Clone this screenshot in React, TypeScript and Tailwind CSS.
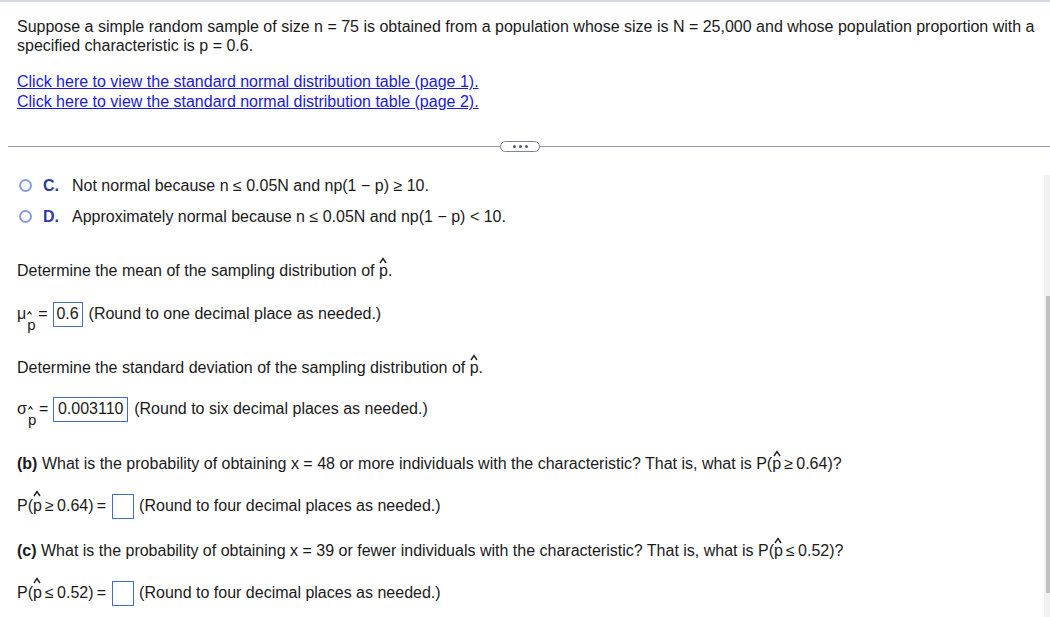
import React from "react";

const Hat = ({ top = -4 }: { top?: number }) => (
  <svg
    className="absolute left-1/2 -translate-x-1/2"
    style={{ top }}
    width="8"
    height="7"
    viewBox="0 0 8 7"
  >
    <path d="M1 6 L4 1.5 L7 6" fill="none" stroke="#1f1f1f" strokeWidth="1.4" />
  </svg>
);

const PHat = () => (
  <span className="relative inline-block">
    p
    <Hat top={-4} />
  </span>
);

const SubPHat = ({ sym }: { sym: string }) => (
  <span className="inline-flex items-start">
    <span>{sym}</span>
    <span className="relative inline-block w-[12px] h-[18px] text-[15px]">
      <svg className="absolute left-[1px] top-[9px]" width="5" height="4" viewBox="0 0 5 4">
        <path d="M0.5 3.5 L2.5 0.8 L4.5 3.5" fill="none" stroke="#1f1f1f" strokeWidth="1.2" />
      </svg>
      <span className="absolute left-[1px] top-[15px] leading-none">p</span>
    </span>
  </span>
);

const Box = ({ children, w }: { children?: React.ReactNode; w: string }) => (
  <span
    className={`inline-flex items-center justify-center h-[25px] border border-[#3f6fc8] ${w} align-middle`}
  >
    {children}
  </span>
);

const Radio = ({ letter, text }: { letter: string; text: React.ReactNode }) => (
  <div className="flex items-center h-[31px]">
    <span className="w-[13px] h-[13px] rounded-full border-2 border-[#8b9be0] ml-[2px]" />
    <span className="ml-[11px] w-[29px] font-bold text-[#2f3c9c]">{letter}</span>
    <span>{text}</span>
  </div>
);

export default function App() {
  return (
    <div
      className="relative w-[1050px] h-[617px] overflow-hidden bg-white text-[16px] text-[#1a1a1a]"
      style={{ fontFamily: '"Liberation Sans", Arial, sans-serif' }}
    >
      <div className="h-[2px] bg-[#d6dae2]" />
      <div className="pl-[17px] pt-[15px]">
        <div className="leading-[19px] whitespace-nowrap">
          <div>
            Suppose a simple random sample of size n = 75 is obtained from a population whose size is N = 25,000 and
            whose population proportion with a
          </div>
          <div>specified characteristic is p = 0.6.</div>
        </div>
        <div className="mt-[17px] leading-[20px] text-[#1a1ad8] underline">
          <div>Click here to view the standard normal distribution table (page 1).</div>
          <div>Click here to view the standard normal distribution table (page 2).</div>
        </div>
      </div>

      <div className="relative mt-[34px] ml-[8px] h-px bg-[#9197ad]">
        <div className="absolute left-[492px] top-[-5px] w-[40px] h-[11px] rounded-full border border-[#7d8398] bg-white flex items-center justify-center gap-[3px]">
          <span className="w-[3px] h-[3px] rounded-full bg-[#555b70]" />
          <span className="w-[3px] h-[3px] rounded-full bg-[#555b70]" />
          <span className="w-[3px] h-[3px] rounded-full bg-[#555b70]" />
        </div>
      </div>

      <div className="pl-[17px] mt-[23px]">
        <Radio letter="C." text={<>Not normal because n ≤ 0.05N and np(1 − p) ≥ 10.</>} />
        <Radio letter="D." text={<>Approximately normal because n ≤ 0.05N and np(1 − p) &lt; 10.</>} />

        <div className="mt-[29px] h-[20px] leading-[20px]">
          Determine the mean of the sampling distribution of <PHat />.
        </div>

        <div className="mt-[20px] h-[26px] flex items-center">
          <SubPHat sym="μ" />
          <span className="mr-[5px]">=</span>
          <Box w="w-[30px]">0.6</Box>
          <span className="ml-[6px]">(Round to one decimal place as needed.)</span>
        </div>

        <div className="mt-[31px] h-[20px] leading-[20px]">
          Determine the standard deviation of the sampling distribution of <PHat />.
        </div>

        <div className="mt-[18px] h-[26px] flex items-center">
          <SubPHat sym="σ" />
          <span className="mr-[5px]">=</span>
          <Box w="w-[75px]">0.003110</Box>
          <span className="ml-[6px]">(Round to six decimal places as needed.)</span>
        </div>

        <div className="mt-[32px] h-[20px] leading-[20px]">
          <b>(b)</b> What is the probability of obtaining x = 48 or more individuals with the characteristic? That is,
          what is P(<PHat />{"\u2009≥\u2009"}0.64)?
        </div>

        <div className="mt-[19px] h-[26px] flex items-center">
          <span>
            P(<PHat />
            {"\u2009≥\u2009"}0.64){"\u2009"}=
          </span>
          <span className="ml-[6px]">
            <Box w="w-[22px]" />
          </span>
          <span className="ml-[5px]">(Round to four decimal places as needed.)</span>
        </div>

        <div className="mt-[22px] h-[20px] leading-[20px]">
          <b>(c)</b> What is the probability of obtaining x = 39 or fewer individuals with the characteristic? That is,
          what is P(<PHat />{"\u2009≤\u2009"}0.52)?
        </div>

        <div className="mt-[19px] h-[26px] flex items-center">
          <span>
            P(<PHat />
            {"\u2009≤\u2009"}0.52){"\u2009"}=
          </span>
          <span className="ml-[6px]">
            <Box w="w-[22px]" />
          </span>
          <span className="ml-[5px]">(Round to four decimal places as needed.)</span>
        </div>
      </div>

      <div className="absolute right-0 top-[175px] bottom-0 w-[6px] bg-[#f1f1f1]">
        <div className="absolute right-0 top-[121px] w-[4px] h-[297px] bg-[#c1c1c1]" />
      </div>
    </div>
  );
}
